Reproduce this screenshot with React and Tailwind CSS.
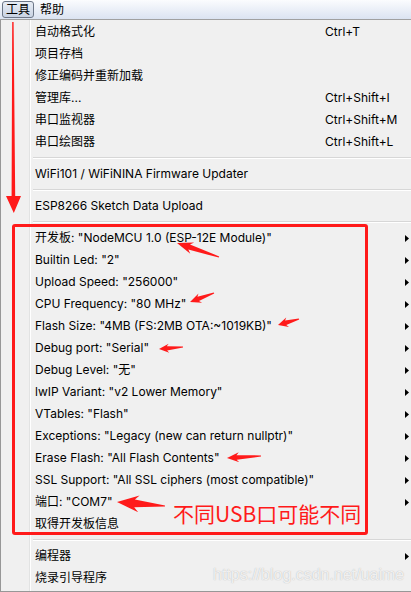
import React from "react";

const topItems = [
  { label: "自动格式化", shortcut: "Ctrl+T" },
  { label: "项目存档" },
  { label: "修正编码并重新加载" },
  { label: "管理库...", shortcut: "Ctrl+Shift+I" },
  { label: "串口监视器", shortcut: "Ctrl+Shift+M" },
  { label: "串口绘图器", shortcut: "Ctrl+Shift+L" },
];

const boardItems = [
  { label: '开发板: "NodeMCU 1.0 (ESP-12E Module)"', sub: true },
  { label: 'Builtin Led: "2"', sub: true },
  { label: 'Upload Speed: "256000"', sub: true },
  { label: 'CPU Frequency: "80 MHz"', sub: true },
  { label: 'Flash Size: "4MB (FS:2MB OTA:~1019KB)"', sub: true },
  { label: 'Debug port: "Serial"', sub: true },
  { label: 'Debug Level: "无"', sub: true },
  { label: 'lwIP Variant: "v2 Lower Memory"', sub: true },
  { label: 'VTables: "Flash"', sub: true },
  { label: 'Exceptions: "Legacy (new can return nullptr)"', sub: true },
  { label: 'Erase Flash: "All Flash Contents"', sub: true },
  { label: 'SSL Support: "All SSL ciphers (most compatible)"', sub: true },
  { label: '端口: "COM7"', sub: true },
  { label: "取得开发板信息" },
];

const bottomItems = [{ label: "编程器", sub: true }, { label: "烧录引导程序" }];

// red annotation arrows: [tipX, tipY, tailX, tailY, headLen, headW]
const arrows = [
  [177, 243, 219, 257, 16, 6],
  [190, 302, 214, 293, 11, 5],
  [278, 325, 299, 319, 10, 5],
  [159, 349, 183, 347, 10, 4.5],
  [227, 458, 261, 456, 12, 5],
  [117, 502, 165, 506, 22, 8.5],
];

function arrowPoints([x1, y1, x2, y2, hl, hw]) {
  const dx = x2 - x1;
  const dy = y2 - y1;
  const len = Math.hypot(dx, dy);
  const ux = dx / len;
  const uy = dy / len;
  const nx = -uy;
  const ny = ux;
  const sw = hw * 0.45;
  const pts = [
    [x1, y1],
    [x1 + ux * hl + nx * hw, y1 + uy * hl + ny * hw],
    [x1 + ux * hl * 0.8 + nx * sw, y1 + uy * hl * 0.8 + ny * sw],
    [x2 + nx * 0.6, y2 + ny * 0.6],
    [x2 - nx * 0.6, y2 - ny * 0.6],
    [x1 + ux * hl * 0.8 - nx * sw, y1 + uy * hl * 0.8 - ny * sw],
    [x1 + ux * hl - nx * hw, y1 + uy * hl - ny * hw],
  ];
  return pts.map((p) => p.map((v) => v.toFixed(1)).join(",")).join(" ");
}

const SubArrow = () => (
  <svg width="4" height="7" viewBox="0 0 4 7" className="absolute right-[2px]">
    <polygon points="0,0 4,3.5 0,7" fill="#000" />
  </svg>
);

const MenuItem = ({ label, shortcut, sub }) => (
  <div className="relative flex items-center h-[22px] pl-[34px] text-[12px] text-black whitespace-nowrap">
    <span>{label}</span>
    {shortcut && <span className="absolute left-[324px]">{shortcut}</span>}
    {sub && <SubArrow />}
  </div>
);

const Separator = () => (
  <div className="h-[10px] flex flex-col justify-center pl-[32px]">
    <div className="h-px bg-[#d7d7d7]" />
    <div className="h-px bg-white" />
  </div>
);

const App = () => {
  return (
    <div
      className="relative w-[411px] h-[592px] overflow-hidden bg-[#f0f0f0]"
      style={{ fontFamily: 'Inter, "Noto Sans CJK SC", sans-serif' }}
    >
      <header className="h-[20px] flex items-center gap-[4px] pl-[2px] border-b border-[#a0a0a0] bg-gradient-to-b from-[#fbfcfe] to-[#dbe3f1] text-[12px] text-black">
        <div className="h-[17px] px-[3px] flex items-center rounded-[3px] border border-[#6d7788] bg-gradient-to-b from-[#e8edf5] to-[#c9d3e3]">
          工具
        </div>
        <div className="px-[2px]">帮助</div>
      </header>

      <main className="relative pt-[1px] border-l border-[#979797] border-b h-[572px]">
        <div className="absolute left-[28px] top-0 bottom-0 w-[2px] flex">
          <div className="w-px bg-[#e2e3e3]" />
          <div className="w-px bg-white" />
        </div>
        {topItems.map((item) => (
          <MenuItem key={item.label} {...item} />
        ))}
        <Separator />
        <MenuItem label="WiFi101 / WiFiNINA Firmware Updater" />
        <Separator />
        <MenuItem label="ESP8266 Sketch Data Upload" />
        <Separator />
        {boardItems.map((item) => (
          <MenuItem key={item.label} {...item} />
        ))}
        <Separator />
        {bottomItems.map((item) => (
          <MenuItem key={item.label} {...item} />
        ))}
      </main>

      {/* annotations drawn over the screenshot */}
      <div className="absolute left-[12px] top-[224px] w-[356px] h-[311px] border-[3px] border-[#ff1a1a] rounded-[3px]" />
      <svg className="absolute inset-0 pointer-events-none" width="411" height="592">
        <polygon points="12.2,22 13.6,22 15.2,196 21,196 13.8,213 6,196 11.6,196" fill="#ff1a1a" />
        {arrows.map((a, i) => (
          <polygon key={i} points={arrowPoints(a)} fill="#ff1a1a" />
        ))}
      </svg>
      <div
        className="absolute left-[173px] top-[499px] text-[21px] leading-[28px] text-[#ff1a1a] whitespace-nowrap"
        style={{ fontFamily: '"Noto Sans CJK SC", sans-serif' }}
      >
        不同USB口可能不同
      </div>
      <div
        className="absolute left-[213px] top-[565px] text-[16px] leading-[20px] text-white/80 whitespace-nowrap [text-shadow:0_0_1px_rgba(120,120,120,0.6)]"
        style={{ fontFamily: '"Liberation Sans", Arial, sans-serif' }}
      >
        https://blog.csdn.net/uaime
      </div>
    </div>
  );
};

export default App;
